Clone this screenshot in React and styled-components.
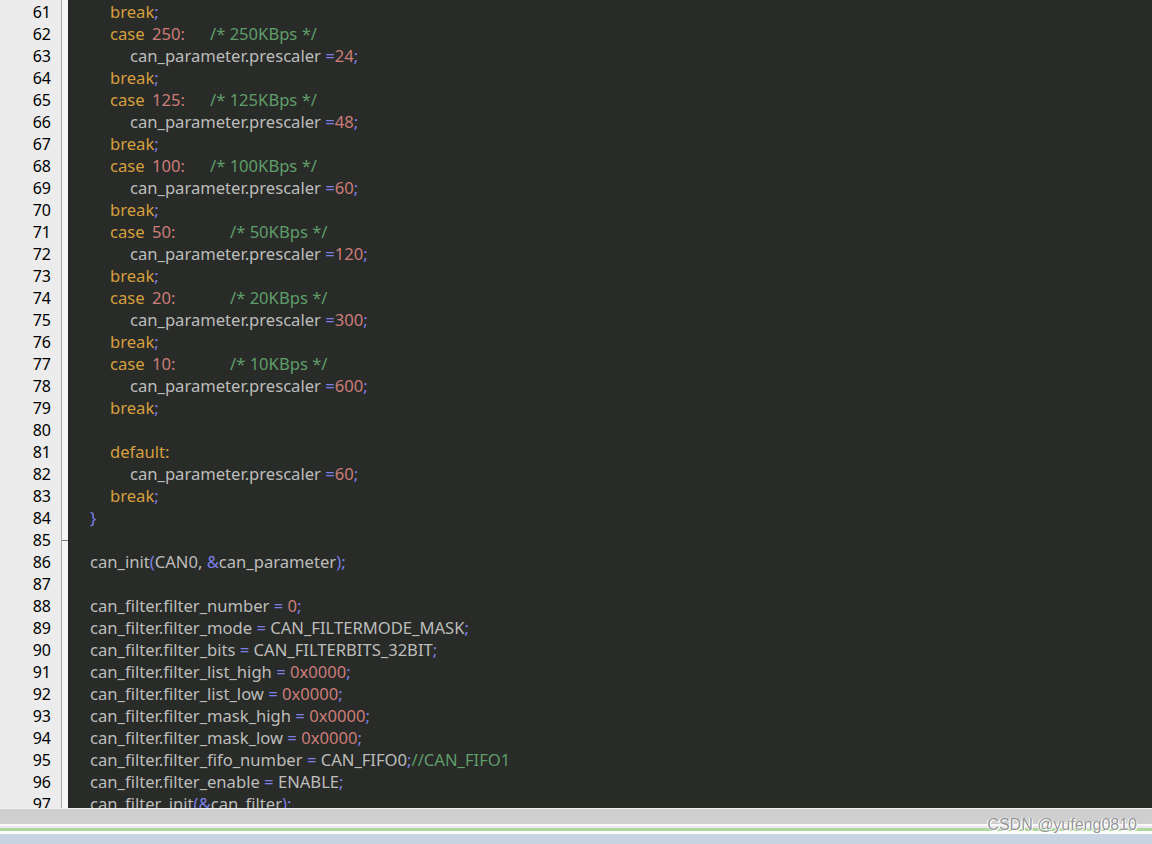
import React from "react";
import styled, { createGlobalStyle } from "styled-components";

const GlobalStyle = createGlobalStyle`
  html, body {
    margin: 0;
    padding: 0;
    background: #c8d4e1;
  }
`;

const Page = styled.div`
  position: relative;
  width: 1152px;
  height: 844px;
  display: flex;
  flex-direction: column;
  overflow: hidden;
`;

const Editor = styled.div`
  display: flex;
  height: 808px;
  overflow: hidden;
  flex-shrink: 0;
`;

const Gutter = styled.div`
  width: 62px;
  flex-shrink: 0;
  background: #ececec;
  border-right: 1px solid #a9a9a9;
  padding-top: 1px;
  box-sizing: border-box;
`;

const LineNo = styled.div`
  height: 22px;
  line-height: 22px;
  text-align: right;
  padding-right: 10px;
  font-family: "Noto Sans", "Liberation Sans", sans-serif;
  font-size: 16px;
  color: #000;
`;

const FoldMargin = styled.div`
  position: relative;
  width: 6px;
  flex-shrink: 0;
  background: #f7f7f7;
`;

const FoldEnd = styled.div`
  position: absolute;
  left: 0;
  top: ${(p) => p.$top}px;
  width: 6px;
  height: 1px;
  background: #7d7d7d;
`;

const Code = styled.div`
  flex: 1;
  background: #282b28;
  padding-top: 1px;
  font-family: "Noto Sans", "Liberation Sans", sans-serif;
  font-size: 16.6px;
  color: #bdbdbb;
`;

const Line = styled.div`
  height: 22px;
  line-height: 22px;
  white-space: pre;
  padding-left: ${(p) => 2 + p.$indent * 20}px;
`;

const Head = styled.span`
  display: inline-block;
  width: ${(p) => p.$w}px;
  word-spacing: 3px;
`;

const colors = {
  k: "#d59f3d",
  n: "#cc7d78",
  c: "#5f9e69",
  p: "#7b7fe3",
  t: "#bdbdbb",
};

const Tok = styled.span`
  color: ${(p) => colors[p.$kind]};
`;

const BottomBar = styled.div`
  flex: 1;
  display: flex;
  flex-direction: column;
`;

const Stripe = styled.div`
  height: ${(p) => p.$h}px;
  background: ${(p) => p.$bg};
  flex-shrink: 0;
`;

const Fill = styled.div`
  flex: 1;
  background: #c8d4e1;
`;

const Watermark = styled.div`
  position: absolute;
  right: 15px;
  bottom: 10px;
  font-family: "Liberation Sans", Arial, sans-serif;
  font-size: 16px;
  color: #969696;
  text-shadow: 1px 1px 0 #fff, -1px 0 0 #fff;
`;

const brk = { indent: 2, toks: [["k", "break"], ["p", ";"]] };
const cs = (n, com, col) => ({ indent: 2, head: [["k", "case"], ["t", " "], ["n", n + ":"]], col, toks: [["c", com]] });
const pre = (v) => ({ indent: 3, toks: [["t", "can_parameter.prescaler "], ["p", "="], ["n", v], ["p", ";"]] });
const flt = (name, val, kind) => ({
  indent: 1,
  toks: [["t", "can_filter." + name + " "], ["p", "="], ["t", " "], [kind, val], ["p", ";"]],
});

const lines = [
  brk,
  cs("250", "/* 250KBps */", 140),
  pre("24"),
  brk,
  cs("125", "/* 125KBps */", 140),
  pre("48"),
  brk,
  cs("100", "/* 100KBps */", 140),
  pre("60"),
  brk,
  cs("50", "/* 50KBps */", 160),
  pre("120"),
  brk,
  cs("20", "/* 20KBps */", 160),
  pre("300"),
  brk,
  cs("10", "/* 10KBps */", 160),
  pre("600"),
  brk,
  { indent: 0, toks: [] },
  { indent: 2, toks: [["k", "default:"]] },
  pre("60"),
  brk,
  { indent: 1, toks: [["p", "}"]] },
  { indent: 0, toks: [] },
  { indent: 1, toks: [["t", "can_init"], ["p", "("], ["t", "CAN0, "], ["p", "&"], ["t", "can_parameter"], ["p", ");"]] },
  { indent: 0, toks: [] },
  flt("filter_number", "0", "n"),
  flt("filter_mode", "CAN_FILTERMODE_MASK", "t"),
  flt("filter_bits", "CAN_FILTERBITS_32BIT", "t"),
  flt("filter_list_high", "0x0000", "n"),
  flt("filter_list_low", "0x0000", "n"),
  flt("filter_mask_high", "0x0000", "n"),
  flt("filter_mask_low", "0x0000", "n"),
  {
    indent: 1,
    toks: [["t", "can_filter.filter_fifo_number "], ["p", "="], ["t", " CAN_FIFO0"], ["p", ";"], ["c", "//CAN_FIFO1"]],
  },
  flt("filter_enable", "ENABLE", "t"),
  { indent: 1, toks: [["t", "can_filter_init"], ["p", "(&"], ["t", "can_filter"], ["p", ");"]] },
];

const FIRST = 61;

export default function App() {
  return (
    <>
      <GlobalStyle />
      <Page>
        <Editor>
          <Gutter>
            {lines.map((_, i) => (
              <LineNo key={i}>{FIRST + i}</LineNo>
            ))}
          </Gutter>
          <FoldMargin>
            <FoldEnd $top={1 + (85 - FIRST) * 22 + 11} />
          </FoldMargin>
          <Code>
            {lines.map((ln, i) => (
              <Line key={i} $indent={ln.indent}>
                {ln.head && (
                  <Head $w={ln.col - ln.indent * 20}>
                    {ln.head.map(([k, s], j) => (
                      <Tok key={j} $kind={k}>{s}</Tok>
                    ))}
                  </Head>
                )}
                {ln.toks.map(([k, s], j) => (
                  <Tok key={j} $kind={k}>{s}</Tok>
                ))}
              </Line>
            ))}
          </Code>
        </Editor>
        <BottomBar>
          <Stripe $h={1} $bg="#f4f4f4" />
          <Stripe $h={15} $bg="#cfcfcf" />
          <Stripe $h={2} $bg="#f8f8f8" />
          <Stripe $h={2} $bg="#ece4f0" />
          <Stripe $h={3} $bg="#acd99b" />
          <Stripe $h={3} $bg="#fbfbfb" />
          <Fill />
        </BottomBar>
        <Watermark>CSDN @yufeng0810</Watermark>
      </Page>
    </>
  );
}
